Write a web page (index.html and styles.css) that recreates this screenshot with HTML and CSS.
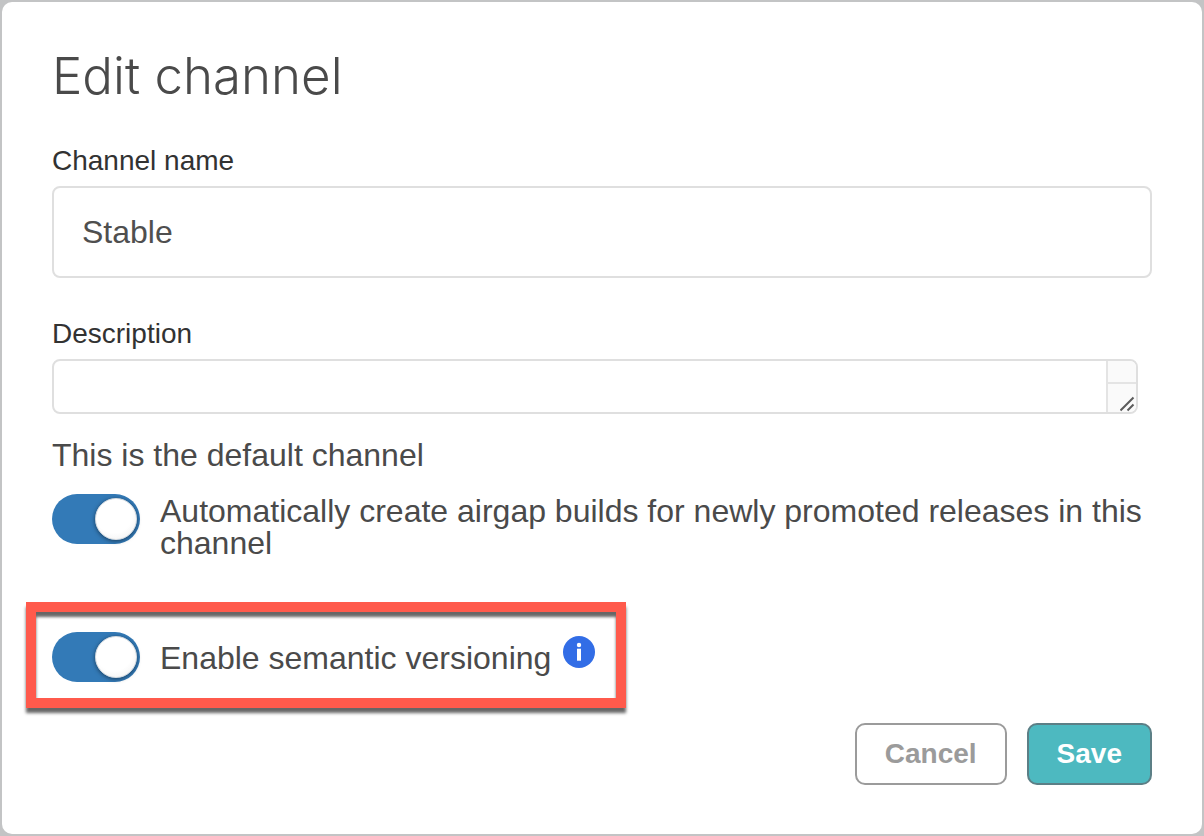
FILE: index.html
```html
<!DOCTYPE html>
<html lang="en">
<head>
<meta charset="utf-8">
<meta name="viewport" content="width=device-width, initial-scale=1">
<title>Edit channel</title>
<link rel="stylesheet" href="styles.css">
</head>
<body>
<main class="modal">
  <h1 class="title">Edit channel</h1>
  <form class="form">
    <div class="field">
      <label class="label" for="name">Channel name</label>
      <input class="input" id="name" type="text" value="Stable">
    </div>
    <div class="field">
      <label class="label" for="description">Description</label>
      <div class="textarea-box">
        <textarea class="textarea" id="description" rows="1"></textarea>
        <div class="scroll-corner">
          <svg class="grip" viewBox="0 0 16 16" aria-hidden="true"><path d="M.5 14.500 13.500 1.500M7.500 14.500 13.500 8.500"/></svg>
        </div>
      </div>
    </div>
    <p class="note">This is the default channel</p>
    <div class="toggle-row">
      <input class="toggle" id="airgap" type="checkbox" role="switch" checked>
      <label class="toggle-label" for="airgap">Automatically create airgap builds for newly promoted releases in this channel</label>
    </div>
    <div class="toggle-row highlight">
      <input class="toggle" id="semver" type="checkbox" role="switch" checked>
      <label class="toggle-label" for="semver">Enable semantic versioning</label>
      <svg class="info" viewBox="0 0 32 32" role="img" aria-label="More information"><circle cx="16" cy="16" r="16" fill="#326de6"/><circle cx="16" cy="9" r="2.200" fill="#fff"/><path d="M14 12.700h4v12h-4z" fill="#fff"/></svg>
    </div>
    <div class="actions">
      <button class="button" type="button">Cancel</button>
      <button class="button primary" type="submit">Save</button>
    </div>
  </form>
</main>
</body>
</html>
```
FILE: styles.css
```css
*,
*::before {
  box-sizing: border-box;
}

body {
  margin: 0;
  padding: 2px;
  min-height: 100vh;
  display: flex;
  background: #c3c4c5;
  color: #4a4a4a;
  font-family: "Liberation Sans", Arial, sans-serif;
  font-size: 32px;
  line-height: 32px;
}

.modal {
  flex: 1;
  padding: 44px 50px 48px;
  background: #fff;
  border-radius: 10px;
}

.title {
  margin: 0 0 39px;
  font-family: Inter, "Liberation Sans", sans-serif;
  font-size: 51px;
  font-weight: 300;
  line-height: 60px;
}

.form {
  display: flex;
  flex-direction: column;
}

.field {
  display: flex;
  flex-direction: column;
  gap: 9px;
}

.field + .field {
  margin-top: 40px;
}

.label {
  color: #323232;
  font-size: 28px;
}

.input,
.textarea {
  width: 100%;
  border: 2px solid #dfdfdf;
  border-radius: 8px;
  background: #fff;
  color: #4f4f4f;
  font: inherit;
}

.input {
  height: 92px;
  padding: 0 28px;
}

.textarea-box {
  position: relative;
  margin-right: 14px;
}

.textarea {
  display: block;
  height: 55px;
  padding: 8px 40px 8px 28px;
  resize: none;
  overflow: hidden;
}

.scroll-corner {
  position: absolute;
  top: 2px;
  right: 2px;
  bottom: 2px;
  width: 30px;
  display: flex;
  align-items: flex-end;
  justify-content: flex-end;
  border-left: 2px solid #e4e4e4;
  border-radius: 0 6px 6px 0;
  background: linear-gradient(#fafafa 21px, #e4e4e4 21px, #e4e4e4 23px, #fafafa 23px);
}

.grip {
  width: 16px;
  height: 16px;
  fill: none;
  stroke: #5c5c5c;
  stroke-width: 2;
}

.note {
  margin: 25px 0 23px;
}

.toggle-row {
  display: flex;
  align-items: flex-start;
  gap: 20px;
}

.toggle {
  appearance: none;
  flex: none;
  width: 88px;
  height: 50px;
  margin: 0;
  padding: 4px;
  border-radius: 25px;
  background: #337ab7;
}

.toggle::before {
  content: "";
  display: block;
  width: 42px;
  height: 42px;
  border: 1px solid #d9dcdf;
  border-radius: 50%;
  background: radial-gradient(circle at 45% 40%, #fff 55%, #ececec);
  box-shadow: 0 1px 4px rgba(0, 0, 0, 0.5);
}

.toggle:checked::before {
  margin-left: 39px;
}

.toggle-label {
  padding-top: 1px;
}

.highlight {
  align-self: flex-start;
  margin: 43px 0 0 -26px;
  padding: 20px 21px 16px 16px;
  border: 10px solid #ff5a4c;
  box-shadow: 0 5px 3px rgba(0, 0, 0, 0.6), inset 0 5px 3px rgba(0, 0, 0, 0.6);
}

.highlight .toggle-label {
  padding-top: 10px;
}

.info {
  width: 32px;
  height: 32px;
  margin: 4px 0 0 -8px;
}

.actions {
  display: flex;
  justify-content: flex-end;
  gap: 20px;
  margin-top: 15px;
}

.button {
  padding: 13px 28px;
  border: 2px solid #9b9b9b;
  border-radius: 10px;
  background: #fff;
  color: #9b9b9b;
  font: inherit;
  font-size: 28px;
  font-weight: 700;
}

.primary {
  border-color: #5c7f86;
  background: #4db9c0;
  color: #fff;
}
```
